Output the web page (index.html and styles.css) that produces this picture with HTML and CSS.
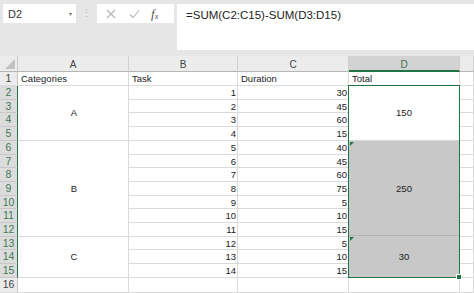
FILE: index.html
```html
<!DOCTYPE html>
<html lang="en">
<head>
    <meta charset="UTF-8">
    <title>Sheet1</title>
    <link rel="stylesheet" href="styles.css">
</head>
<body>

<!-- formula bar -->
<div class="formula-bar">
    <div class="name-box">
        <span>D2</span>
        <span class="caret">&#9662;</span>
    </div>
    <div class="grip">&#8942;</div>
    <div class="tools">
        <svg class="tool" width="10" height="10" viewBox="0 0 10 10">
            <path d="M1 1 L9 9 M9 1 L1 9" stroke="#b5b5b5" stroke-width="1.1" fill="none"/>
        </svg>
        <svg class="tool" width="11" height="10" viewBox="0 0 11 10">
            <path d="M1 5.5 L4 8.5 L10 1.5" stroke="#b5b5b5" stroke-width="1.1" fill="none"/>
        </svg>
        <span class="fx">f<sub>x</sub></span>
    </div>
    <div class="formula">=SUM(C2:C15)-SUM(D3:D15)</div>
</div>

<!-- sheet grid -->
<div class="sheet">
    <div class="corner"></div>
    <div class="colh col-a">A</div>
    <div class="colh col-b">B</div>
    <div class="colh col-c">C</div>
    <div class="colh col-d active">D</div>
    <div class="colh col-e"></div>

    <div class="rowh">1</div>
    <div class="cell col-a">Categories</div>
    <div class="cell col-b">Task</div>
    <div class="cell col-c">Duration</div>
    <div class="cell col-d">Total</div>
    <div class="cell col-e"></div>

    <div class="rowh sel-row">2</div>
    <div class="cell col-a merge span4">A</div>
    <div class="cell col-b num">1</div>
    <div class="cell col-c num">30</div>
    <!-- D2:D15 selected, three merged blocks -->
    <div class="totals">
        <div class="total first">150</div>
        <div class="total mid flag">250</div>
        <div class="total last flag">30</div>
        <span class="handle"></span>
    </div>
    <div class="cell col-e"></div>

    <div class="rowh sel-row">3</div>
    <div class="cell col-b num">2</div>
    <div class="cell col-c num">45</div>
    <div class="cell col-e"></div>

    <div class="rowh sel-row">4</div>
    <div class="cell col-b num">3</div>
    <div class="cell col-c num">60</div>
    <div class="cell col-e"></div>

    <div class="rowh sel-row">5</div>
    <div class="cell col-b num">4</div>
    <div class="cell col-c num">15</div>
    <div class="cell col-e"></div>

    <div class="rowh sel-row">6</div>
    <div class="cell col-a merge span7">B</div>
    <div class="cell col-b num">5</div>
    <div class="cell col-c num">40</div>
    <div class="cell col-e"></div>

    <div class="rowh sel-row">7</div>
    <div class="cell col-b num">6</div>
    <div class="cell col-c num">45</div>
    <div class="cell col-e"></div>

    <div class="rowh sel-row">8</div>
    <div class="cell col-b num">7</div>
    <div class="cell col-c num">60</div>
    <div class="cell col-e"></div>

    <div class="rowh sel-row">9</div>
    <div class="cell col-b num">8</div>
    <div class="cell col-c num">75</div>
    <div class="cell col-e"></div>

    <div class="rowh sel-row">10</div>
    <div class="cell col-b num">9</div>
    <div class="cell col-c num">5</div>
    <div class="cell col-e"></div>

    <div class="rowh sel-row">11</div>
    <div class="cell col-b num">10</div>
    <div class="cell col-c num">10</div>
    <div class="cell col-e"></div>

    <div class="rowh sel-row">12</div>
    <div class="cell col-b num">11</div>
    <div class="cell col-c num">15</div>
    <div class="cell col-e"></div>

    <div class="rowh sel-row">13</div>
    <div class="cell col-a merge span3">C</div>
    <div class="cell col-b num">12</div>
    <div class="cell col-c num">5</div>
    <div class="cell col-e"></div>

    <div class="rowh sel-row">14</div>
    <div class="cell col-b num">13</div>
    <div class="cell col-c num">10</div>
    <div class="cell col-e"></div>

    <div class="rowh sel-row">15</div>
    <div class="cell col-b num">14</div>
    <div class="cell col-c num">15</div>
    <div class="cell col-e"></div>

    <div class="rowh">16</div>
    <div class="cell col-a"></div>
    <div class="cell col-b"></div>
    <div class="cell col-c"></div>
    <div class="cell col-d"></div>
    <div class="cell col-e"></div>
</div>

</body>
</html>
```

FILE: styles.css
```css
body {
    margin: 0;
    font-family: 'Liberation Sans', Arial, sans-serif;
    font-size: 9.5px;
    color: #222;
    background-color: #fff;
    overflow: hidden;
}
.formula-bar {
    display: flex;
    align-items: flex-start;
    height: 56px;
    box-sizing: border-box;
    padding: 4px 0 0 3px;
    background-color: #e6e6e6;
}
.name-box {
    width: 73px;
    height: 19px;
    box-sizing: border-box;
    padding: 0 4px 0 5px;
    display: flex;
    align-items: center;
    justify-content: space-between;
    background-color: #fff;
    font-size: 11px;
    color: #333;
}
.caret {
    font-size: 6px;
    color: #777;
}
.grip {
    width: 21px;
    height: 19px;
    line-height: 19px;
    text-align: center;
    color: #b8b8b8;
    font-size: 11px;
}
.tools {
    width: 77px;
    height: 19px;
    display: flex;
    align-items: center;
    background-color: #fff;
    padding-left: 9px;
    box-sizing: border-box;
}
.tool {
    margin-right: 13px;
}
.tools .tool:nth-child(2) {
    margin-right: 11px;
}
.fx {
    font-family: 'Liberation Serif', 'Times New Roman', serif;
    font-style: italic;
    font-size: 13px;
    color: #555;
}
.fx sub {
    font-size: 8px;
    vertical-align: -1px;
}
.formula {
    flex: 1;
    height: 46px;
    margin-left: 3px;
    padding: 5px 0 0 9px;
    box-sizing: border-box;
    background-color: #fff;
    font-size: 11.5px;
    color: #222;
}

/* grid */
.sheet {
    display: grid;
    grid-template-columns: 18px 111px 109px 111px 111px 1fr;
    grid-template-rows: 16px 14px repeat(14, 13.71px) 1fr;
    height: 237px;
}
.col-a { grid-column: 2; }
.col-b { grid-column: 3; }
.col-c { grid-column: 4; }
.col-d { grid-column: 5; }
.col-e { grid-column: 6; }
.span4 { grid-row: span 4; }
.span7 { grid-row: span 7; }
.span3 { grid-row: span 3; }

.corner {
    grid-column: 1;
    background-color: #ececec;
    border-right: 1px solid #c8c8c8;
    border-bottom: 1px solid #b5b5b5;
    position: relative;
}
.corner::after {
    content: '';
    position: absolute;
    right: 2px;
    bottom: 2px;
    border-style: solid;
    border-width: 0 0 10px 10px;
    border-color: transparent transparent #c1c1c1 transparent;
}
.colh {
    background-color: #ececec;
    border-right: 1px solid #d0d0d0;
    border-bottom: 1px solid #b5b5b5;
    text-align: center;
    line-height: 17px;
    color: #444;
    font-size: 10px;
}
.colh.active {
    background-color: #d3d3d3;
    border-bottom: 2px solid #217346;
    color: #3e6f50;
}
.rowh {
    grid-column: 1;
    background-color: #ececec;
    border-right: 1px solid #c8c8c8;
    border-bottom: 1px solid #dcdcdc;
    text-align: center;
    font-size: 10.5px;
    line-height: 13px;
    color: #444;
}
.rowh.sel-row {
    background-color: #dcdcdc;
    border-right: 1px solid #217346;
    border-bottom-color: #c8c8c8;
    color: #3e7a56;
}
.cell {
    border-right: 1px solid #dadada;
    border-bottom: 1px solid #dadada;
    padding: 0 1px 0 3px;
    line-height: 13px;
    white-space: nowrap;
    overflow: hidden;
}
.num {
    text-align: right;
}
.merge {
    display: flex;
    align-items: center;
    justify-content: center;
}

/* selected totals D2:D15 */
.totals {
    grid-column: 5;
    grid-row: span 14;
    display: flex;
    flex-direction: column;
    border: 1px solid #217346;
    margin: -1px 0 0 -1px;
    position: relative;
}
.total {
    flex: 4 1 0;
    display: flex;
    align-items: center;
    justify-content: center;
    background-color: #c8c8c8;
    border-bottom: 1px solid #b4b4b4;
    position: relative;
}
.total.first {
    background-color: #fff;
    border-bottom-color: #dadada;
}
.total.mid {
    flex-grow: 7;
}
.total.last {
    flex-grow: 3;
    border-bottom: none;
}
.flag::before {
    content: '';
    position: absolute;
    left: 1px;
    top: 1px;
    border-style: solid;
    border-width: 4px 4px 0 0;
    border-color: #217346 transparent transparent transparent;
}
.handle {
    position: absolute;
    right: -3px;
    bottom: -3px;
    width: 4px;
    height: 4px;
    background-color: #217346;
    border: 1px solid #fff;
}
```
